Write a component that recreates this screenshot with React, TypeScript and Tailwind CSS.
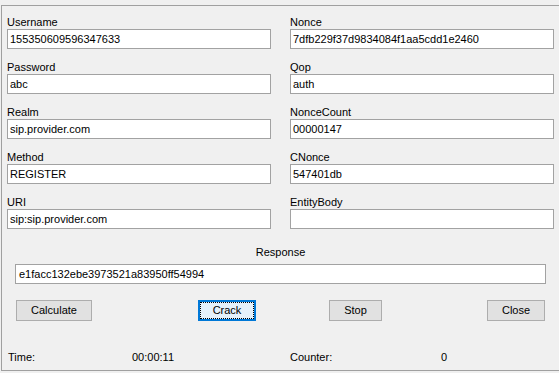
import React from 'react'

interface Field { label: string; value: string }

const LEFT: Field[] = [
  { label: 'Username', value: '155350609596347633' },
  { label: 'Password', value: 'abc' },
  { label: 'Realm', value: 'sip.provider.com' },
  { label: 'Method', value: 'REGISTER' },
  { label: 'URI', value: 'sip:sip.provider.com' },
]

const RIGHT: Field[] = [
  { label: 'Nonce', value: '7dfb229f37d9834084f1aa5cdd1e2460' },
  { label: 'Qop', value: 'auth' },
  { label: 'NonceCount', value: '00000147' },
  { label: 'CNonce', value: '547401db' },
  { label: 'EntityBody', value: '' },
]

function TextBox({ value, className = '' }: { value: string; className?: string }) {
  return (
    <div className={`h-[20px] border border-[#a2a2a2] bg-white pl-[2px] flex items-center leading-[13px] whitespace-nowrap overflow-hidden ${className}`}>
      {value}
    </div>
  )
}

function FieldBox({ f }: { f: Field }) {
  return (
    <div className="flex flex-col">
      <div className="h-[13px] leading-[13px]">{f.label}</div>
      <TextBox value={f.value} />
    </div>
  )
}

function Btn({ label, className = '', focused = false }: { label: string; className?: string; focused?: boolean }) {
  if (focused) {
    return (
      <div className={`relative h-[21px] border-2 border-[#0078d7] bg-[#e5f1fb] flex items-center justify-center leading-[13px] ${className}`}>
        <div className="absolute inset-[0px] border border-dotted border-black" />
        {label}
      </div>
    )
  }
  return (
    <div className={`h-[21px] border border-[#adadad] bg-[#e1e1e1] flex items-center justify-center leading-[13px] ${className}`}>
      {label}
    </div>
  )
}

export default function App() {
  return (
    <div
      className="w-[559px] h-[373px] bg-[#f0f0f0] overflow-hidden text-[11px] text-black"
      style={{ fontFamily: '"Liberation Sans", Arial, sans-serif' }}
    >
      <div className="mt-[5px] ml-[1px] w-[570px] h-[366px] border-l border-y border-[#a0a0a0] flex flex-col">
        <div className="grid grid-cols-[264px_264px] gap-x-[19px] pt-[10px] pl-[5px]">
          <div className="flex flex-col gap-[12px]">
            {LEFT.map(f => <FieldBox key={f.label} f={f} />)}
          </div>
          <div className="flex flex-col gap-[12px]">
            {RIGHT.map(f => <FieldBox key={f.label} f={f} />)}
          </div>
        </div>

        <div className="mt-[17px] ml-[13px] w-[531px] flex flex-col">
          <div className="h-[13px] leading-[13px] text-center mb-[5px]">Response</div>
          <TextBox value="e1facc132ebe3973521a83950ff54994" className="pl-[3px]" />
        </div>

        <div className="mt-[16px] flex items-center">
          <Btn label="Calculate" className="ml-[14px] w-[76px]" />
          <Btn label="Crack" focused className="ml-[106px] w-[58px]" />
          <Btn label="Stop" className="ml-[73px] w-[53px]" />
          <Btn label="Close" className="ml-[105px] w-[58px]" />
        </div>

        <div className="mt-[30px] flex leading-[13px]">
          <div className="ml-[6px] w-[124px]">Time:</div>
          <div className="w-[158px]">00:00:11</div>
          <div className="w-[151px]">Counter:</div>
          <div>0</div>
        </div>
      </div>
    </div>
  )
}
